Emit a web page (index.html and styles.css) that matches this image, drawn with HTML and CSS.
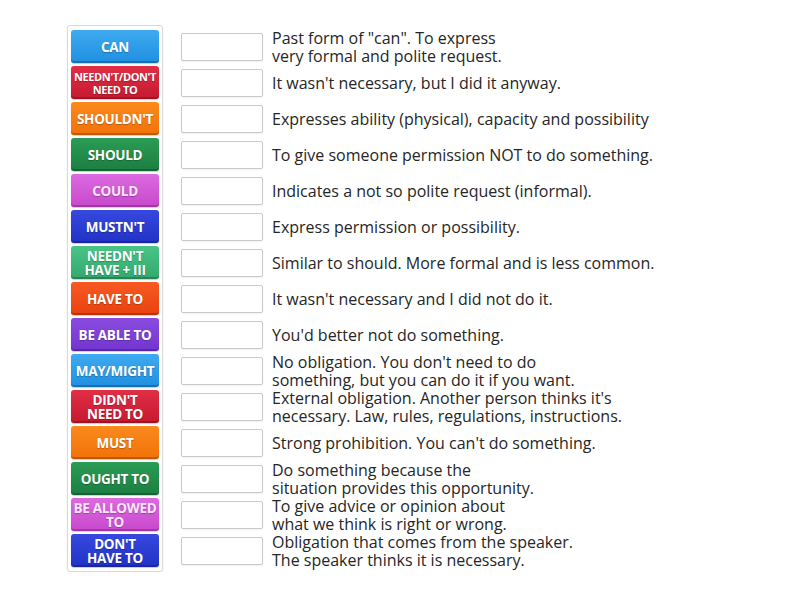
FILE: index.html
```html
<!DOCTYPE html>
<html lang="en">
<head>
<meta charset="utf-8">
<title>Modal verbs – match up</title>
<link rel="stylesheet" href="styles.css">
</head>
<body>
<main class="board">
  <div class="bank">
    <div class="tile c-blue">CAN</div>
    <div class="tile c-red tiny">NEEDN'T/DON'T<br>NEED TO</div>
    <div class="tile c-orange">SHOULDN'T</div>
    <div class="tile c-green">SHOULD</div>
    <div class="tile c-pink">COULD</div>
    <div class="tile c-indigo">MUSTN'T</div>
    <div class="tile c-teal">NEEDN'T<br>HAVE + III</div>
    <div class="tile c-flame">HAVE TO</div>
    <div class="tile c-purple">BE ABLE TO</div>
    <div class="tile c-blue">MAY/MIGHT</div>
    <div class="tile c-red">DIDN'T<br>NEED TO</div>
    <div class="tile c-orange">MUST</div>
    <div class="tile c-green">OUGHT TO</div>
    <div class="tile c-pink">BE ALLOWED<br>TO</div>
    <div class="tile c-indigo">DON'T<br>HAVE TO</div>
  </div>
  <div class="targets">
    <div class="row"><span class="slot"></span><p class="def">Past form of "can". To express<br>very formal and polite request.</p></div>
    <div class="row"><span class="slot"></span><p class="def">It wasn't necessary, but I did it anyway.</p></div>
    <div class="row"><span class="slot"></span><p class="def">Expresses ability (physical), capacity and possibility</p></div>
    <div class="row"><span class="slot"></span><p class="def">To give someone permission NOT to do something.</p></div>
    <div class="row"><span class="slot"></span><p class="def">Indicates a not so polite request (informal).</p></div>
    <div class="row"><span class="slot"></span><p class="def">Express permission or possibility.</p></div>
    <div class="row"><span class="slot"></span><p class="def">Similar to should. More formal and is less common.</p></div>
    <div class="row"><span class="slot"></span><p class="def">It wasn't necessary and I did not do it.</p></div>
    <div class="row"><span class="slot"></span><p class="def">You'd better not do something.</p></div>
    <div class="row"><span class="slot"></span><p class="def">No obligation. You don't need to do<br>something, but you can do it if you want.</p></div>
    <div class="row"><span class="slot"></span><p class="def">External obligation. Another person thinks it's<br>necessary. Law, rules, regulations, instructions.</p></div>
    <div class="row"><span class="slot"></span><p class="def">Strong prohibition. You can't do something.</p></div>
    <div class="row"><span class="slot"></span><p class="def">Do something because the<br>situation provides this opportunity.</p></div>
    <div class="row"><span class="slot"></span><p class="def">To give advice or opinion about<br>what we think is right or wrong.</p></div>
    <div class="row"><span class="slot"></span><p class="def">Obligation that comes from the speaker.<br>The speaker thinks it is necessary.</p></div>
  </div>
</main>
</body>
</html>
```
FILE: styles.css
```css
html, body {
  margin: 0;
  background: #ffffff;
}

.board {
  display: flex;
  align-items: flex-start;
  padding: 25px 0 0 67px;
  font-family: "Open Sans", "Liberation Sans", sans-serif;
}

/* word bank with the draggable tiles */
.bank {
  display: flex;
  flex-direction: column;
  gap: 3px;
  padding: 4px 3px 4px 3px;
  border: 1px solid #d9d9d9;
  border-radius: 3px;
  box-shadow: 0 1px 2px rgba(0, 0, 0, 0.08);
}

.tile {
  width: 88px;
  height: 33px;
  box-sizing: border-box;
  display: flex;
  align-items: center;
  justify-content: center;
  text-align: center;
  border-radius: 3px;
  color: #fff;
  font-weight: 700;
  font-size: 13.5px;
  line-height: 14px;
  letter-spacing: -0.3px;
  text-shadow: 0 1px 1px rgba(0, 0, 0, 0.25);
  box-shadow: inset 0 -2px 0 rgba(0, 0, 0, 0.22), 0 1px 1px rgba(0, 0, 0, 0.2);
}

.tile.tiny {
  font-size: 11px;
  line-height: 13px;
  letter-spacing: -0.4px;
}

.c-blue   { background: linear-gradient(#3eaaf0, #1f8fe0); }
.c-red    { background: linear-gradient(#e02e45, #c51a31); }
.c-orange { background: linear-gradient(#fb8a1c, #f27108); }
.c-green  { background: linear-gradient(#2a9c55, #1c7e41); }
.c-pink   { background: linear-gradient(#dc6ae0, #c848cc); color: #fde6fd; }
.c-indigo { background: linear-gradient(#3648de, #2232c6); }
.c-teal   { background: linear-gradient(#49c487, #33a86e); }
.c-flame  { background: linear-gradient(#f85a22, #e8410f); }
.c-purple { background: linear-gradient(#8a4be0, #7335cf); }

/* answer slots and their definitions */
.targets {
  display: flex;
  flex-direction: column;
  margin-left: 18px;
  padding-top: 4px;
}

.row {
  display: flex;
  align-items: center;
  gap: 9px;
  height: 36px;
}

.slot {
  flex: none;
  width: 82px;
  height: 28px;
  box-sizing: border-box;
  border: 1px solid #c9c9c9;
  border-radius: 2px;
  background: #fff;
  box-shadow: 0 1px 2px rgba(0, 0, 0, 0.06);
}

.def {
  margin: 0;
  font-size: 16px;
  line-height: 18px;
  color: #262626;
  white-space: nowrap;
}
```
